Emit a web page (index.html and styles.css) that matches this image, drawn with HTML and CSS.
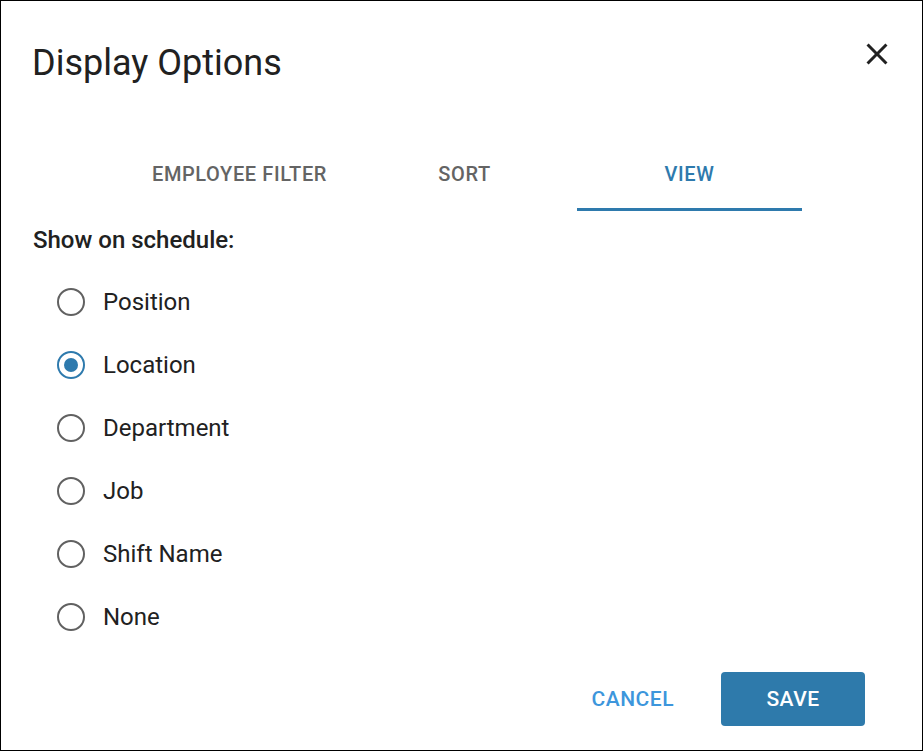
FILE: index.html
```html
<!DOCTYPE html>
<html lang="en">
<head>
    <meta charset="UTF-8">
    <meta name="viewport" content="width=device-width, initial-scale=1.0">
    <title>Display Options</title>
    <link rel="stylesheet" href="styles.css">
</head>
<body>
    <div class="dialog">
        <div class="dialog-header">
            <h1 class="dialog-title">Display Options</h1>
            <button class="close-button" aria-label="Close">
                <svg viewBox="0 0 24 24" width="36" height="36"><path d="M19 6.41 17.59 5 12 10.59 6.41 5 5 6.41 10.59 12 5 17.59 6.41 19 12 13.41 17.59 19 19 17.59 13.41 12z"/></svg>
            </button>
        </div>

        <div class="tabs">
            <div class="tab">Employee Filter</div>
            <div class="tab">Sort</div>
            <div class="tab active">View</div>
        </div>

        <div class="view-panel">
            <p class="section-label">Show on schedule:</p>
            <div class="radio-list">
                <label class="radio-row">
                    <span class="radio"></span>
                    <span class="radio-text">Position</span>
                </label>
                <label class="radio-row">
                    <span class="radio checked"></span>
                    <span class="radio-text">Location</span>
                </label>
                <label class="radio-row">
                    <span class="radio"></span>
                    <span class="radio-text">Department</span>
                </label>
                <label class="radio-row">
                    <span class="radio"></span>
                    <span class="radio-text">Job</span>
                </label>
                <label class="radio-row">
                    <span class="radio"></span>
                    <span class="radio-text">Shift Name</span>
                </label>
                <label class="radio-row">
                    <span class="radio"></span>
                    <span class="radio-text">None</span>
                </label>
            </div>
        </div>

        <div class="dialog-actions">
            <button class="text-button">Cancel</button>
            <button class="primary-button">Save</button>
        </div>
    </div>
</body>
</html>
```

FILE: styles.css
```css
body {
    margin: 0;
    padding: 0;
    font-family: Roboto, "Liberation Sans", sans-serif;
    background-color: white;
    color: #212121;
}
.dialog {
    width: 923px;
    height: 751px;
    box-sizing: border-box;
    border: 1px solid black;
    display: flex;
    flex-direction: column;
}
.dialog-header {
    display: flex;
    justify-content: space-between;
    align-items: flex-start;
    padding: 38px 27px 0 31px;
}
.dialog-title {
    margin: 0;
    font-size: 36px;
    font-weight: 400;
    line-height: 48px;
}
.close-button {
    background: none;
    border: none;
    padding: 0;
    margin-top: -3px;
    width: 36px;
    height: 36px;
    cursor: pointer;
}
.close-button svg {
    display: block;
    fill: #212121;
}
.tabs {
    display: flex;
    margin: 52px 0 0 126px;
}
.tab {
    width: 225px;
    height: 72px;
    box-sizing: border-box;
    display: flex;
    align-items: center;
    justify-content: center;
    font-size: 20px;
    font-weight: 500;
    letter-spacing: 0.6px;
    text-transform: uppercase;
    color: #646464;
    border-bottom: 3px solid transparent;
    padding-top: 1px;
}
.tab.active {
    color: #2e7aad;
    border-bottom-color: #2e7aad;
}
.view-panel {
    padding: 0 32px;
}
.section-label {
    margin: 14px 0 0;
    font-size: 24px;
    font-weight: 500;
    line-height: 30px;
}
.radio-list {
    display: flex;
    flex-direction: column;
    margin-top: 15px;
    padding-left: 24px;
}
.radio-row {
    display: flex;
    align-items: center;
    gap: 18px;
    height: 63px;
    cursor: pointer;
}
.radio {
    width: 28px;
    height: 28px;
    box-sizing: border-box;
    border: 2.8px solid #616161;
    border-radius: 50%;
    display: flex;
    align-items: center;
    justify-content: center;
}
.radio.checked {
    border-color: #2e7aad;
}
.radio.checked::after {
    content: "";
    width: 14px;
    height: 14px;
    border-radius: 50%;
    background-color: #2e7aad;
}
.radio-text {
    font-size: 24px;
    line-height: 30px;
}
.dialog-actions {
    margin-top: auto;
    display: flex;
    justify-content: flex-end;
    align-items: center;
    gap: 31px;
    padding: 0 57px 24px 0;
}
.text-button,
.primary-button {
    font-family: inherit;
    font-size: 21px;
    font-weight: 500;
    letter-spacing: 0.5px;
    text-transform: uppercase;
    border: none;
    border-radius: 4px;
    height: 54px;
    cursor: pointer;
}
.text-button {
    background: none;
    color: #3d96dc;
    padding: 0 16px;
}
.primary-button {
    width: 144px;
    background-color: #2e7aab;
    color: white;
}
```
